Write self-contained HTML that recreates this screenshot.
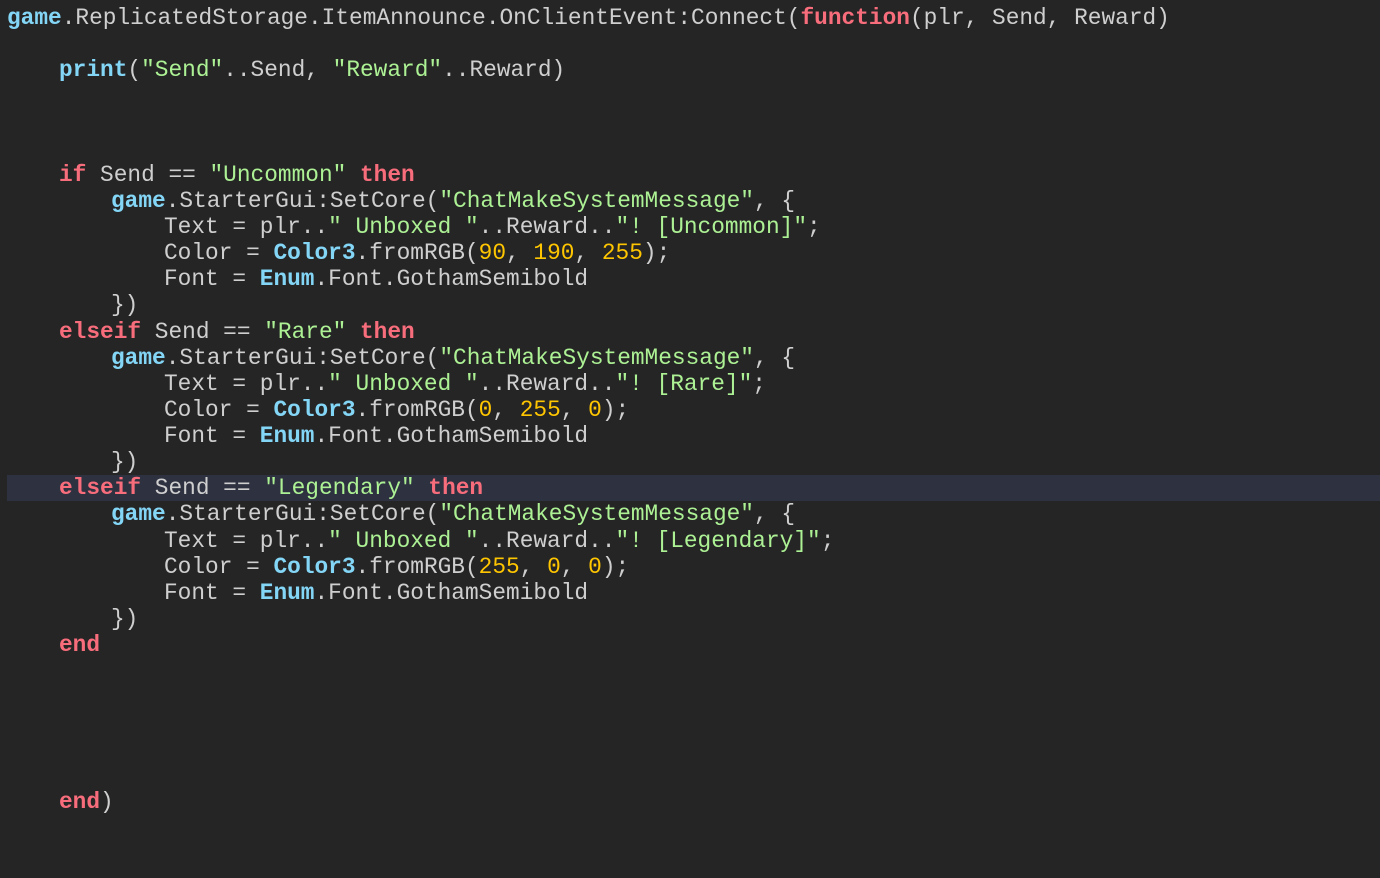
<!DOCTYPE html>
<html><head><meta charset="utf-8"><style>
html,body{margin:0;padding:0;background:#252525;width:1380px;height:878px;overflow:hidden}
.c{position:absolute;top:5px;left:0;width:1380px;font-family:"Liberation Mono",monospace;font-size:22.8px;line-height:26.13px;color:#cfcfcf}
.l{height:26.13px;padding-left:7px;white-space:pre}
.h{background:#2e3140}
.i1{padding-left:59px}.i2{padding-left:111px}.i3{padding-left:164px}
.k{color:#f86d7c;font-weight:bold}
.b{color:#84d6f7;font-weight:bold}
.s{color:#adf195}
.n{color:#ffc600}
</style></head><body><div class="c"><div class="l"><span class="b">game</span>.ReplicatedStorage.ItemAnnounce.OnClientEvent:Connect(<span class="k">function</span>(plr, Send, Reward)</div><div class="l"></div><div class="l i1"><span class="b">print</span>(<span class="s">"Send"</span>..Send, <span class="s">"Reward"</span>..Reward)</div><div class="l"></div><div class="l"></div><div class="l"></div><div class="l i1"><span class="k">if</span> Send == <span class="s">"Uncommon"</span> <span class="k">then</span></div><div class="l i2"><span class="b">game</span>.StarterGui:SetCore(<span class="s">"ChatMakeSystemMessage"</span>, {</div><div class="l i3">Text = plr..<span class="s">" Unboxed "</span>..Reward..<span class="s">"! [Uncommon]"</span>;</div><div class="l i3">Color = <span class="b">Color3</span>.fromRGB(<span class="n">90</span>, <span class="n">190</span>, <span class="n">255</span>);</div><div class="l i3">Font = <span class="b">Enum</span>.Font.GothamSemibold</div><div class="l i2">})</div><div class="l i1"><span class="k">elseif</span> Send == <span class="s">"Rare"</span> <span class="k">then</span></div><div class="l i2"><span class="b">game</span>.StarterGui:SetCore(<span class="s">"ChatMakeSystemMessage"</span>, {</div><div class="l i3">Text = plr..<span class="s">" Unboxed "</span>..Reward..<span class="s">"! [Rare]"</span>;</div><div class="l i3">Color = <span class="b">Color3</span>.fromRGB(<span class="n">0</span>, <span class="n">255</span>, <span class="n">0</span>);</div><div class="l i3">Font = <span class="b">Enum</span>.Font.GothamSemibold</div><div class="l i2">})</div><div class="l h" style="padding-left:52px;margin-left:7px"><span class="k">elseif</span> Send == <span class="s">"Legendary"</span> <span class="k">then</span></div><div class="l i2"><span class="b">game</span>.StarterGui:SetCore(<span class="s">"ChatMakeSystemMessage"</span>, {</div><div class="l i3">Text = plr..<span class="s">" Unboxed "</span>..Reward..<span class="s">"! [Legendary]"</span>;</div><div class="l i3">Color = <span class="b">Color3</span>.fromRGB(<span class="n">255</span>, <span class="n">0</span>, <span class="n">0</span>);</div><div class="l i3">Font = <span class="b">Enum</span>.Font.GothamSemibold</div><div class="l i2">})</div><div class="l i1"><span class="k">end</span></div><div class="l"></div><div class="l"></div><div class="l"></div><div class="l"></div><div class="l"></div><div class="l i1"><span class="k">end</span>)</div></div></body></html>
